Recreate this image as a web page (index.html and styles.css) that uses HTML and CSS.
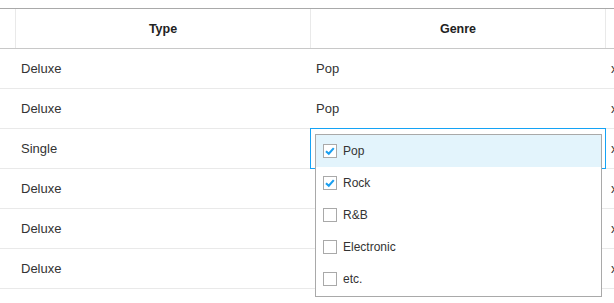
FILE: index.html
```html
<!DOCTYPE html>
<html>
<head>
<meta charset="utf-8">
<link rel="stylesheet" href="styles.css">
</head>
<body>
<div class="table">
  <div class="row head">
    <div class="cell c0"></div>
    <div class="cell c1">Type</div>
    <div class="cell c2">Genre</div>
    <div class="cell c3"></div>
  </div>
  <div class="row">
    <div class="cell c0"></div><div class="cell c1">Deluxe</div><div class="cell c2">Pop</div><div class="cell c3">x</div>
  </div>
  <div class="row">
    <div class="cell c0"></div><div class="cell c1">Deluxe</div><div class="cell c2">Pop</div><div class="cell c3">x</div>
  </div>
  <div class="row">
    <div class="cell c0"></div><div class="cell c1">Single</div>
    <div class="cell c2 editing">
      <div class="editor"></div>
      <div class="dropdown">
        <div class="item active"><span class="box checked"><svg viewBox="0 0 14 14" width="12" height="12"><path d="M2.3 7.2 L5.6 10.2 L11.4 3.6" fill="none" stroke="#1a9ff0" stroke-width="2.4"/></svg></span><span class="label">Pop</span></div>
        <div class="item"><span class="box checked"><svg viewBox="0 0 14 14" width="12" height="12"><path d="M2.3 7.2 L5.6 10.2 L11.4 3.6" fill="none" stroke="#1a9ff0" stroke-width="2.4"/></svg></span><span class="label">Rock</span></div>
        <div class="item"><span class="box"></span><span class="label">R&amp;B</span></div>
        <div class="item"><span class="box"></span><span class="label">Electronic</span></div>
        <div class="item"><span class="box"></span><span class="label">etc.</span></div>
      </div>
    </div>
    <div class="cell c3">x</div>
  </div>
  <div class="row">
    <div class="cell c0"></div><div class="cell c1">Deluxe</div><div class="cell c2"></div><div class="cell c3">x</div>
  </div>
  <div class="row">
    <div class="cell c0"></div><div class="cell c1">Deluxe</div><div class="cell c2"></div><div class="cell c3">x</div>
  </div>
  <div class="row">
    <div class="cell c0"></div><div class="cell c1">Deluxe</div><div class="cell c2"></div><div class="cell c3">x</div>
  </div>
</div>
</body>
</html>
```

FILE: styles.css
```css
html, body {
  margin: 0;
  padding: 0;
  background: #fff;
}
body {
  padding-top: 8px;
  width: 614px;
  height: 303px;
  box-sizing: border-box;
  overflow: hidden;
  font-family: "Liberation Sans", Arial, sans-serif;
  font-size: 13px;
  color: #333;
}
.table {
  border-top: 1px solid #a9a9a9;
  width: 614px;
}
.row {
  display: grid;
  grid-template-columns: 16px 295px 295px 8px;
  height: 40px;
  box-sizing: border-box;
  border-bottom: 1px solid #e9e9e9;
}
.cell {
  display: flex;
  align-items: center;
  padding-left: 5px;
  white-space: nowrap;
  overflow: hidden;
  box-sizing: border-box;
}
.c2.editing {
  overflow: visible;
}
.head {
  border-bottom: 1px solid #c8c8c8;
}
.head .cell {
  justify-content: center;
  padding-left: 0;
  font-weight: bold;
  font-size: 12.5px;
  color: #222;
  border-right: 1px solid #e9e9e9;
}
.head .c3 {
  border-right: none;
}
.editing {
  position: relative;
}
.editor {
  position: absolute;
  top: -1px;
  left: -1px;
  width: 296px;
  height: 41px;
  box-sizing: border-box;
  border: 1px solid #14a3f5;
}
.dropdown {
  position: absolute;
  top: 5px;
  left: 4px;
  width: 287px;
  box-sizing: border-box;
  border: 1px solid #a9a9a9;
  background: #fff;
  z-index: 2;
  font-size: 12px;
  padding-bottom: 1px;
}
.item {
  height: 32px;
  display: flex;
  align-items: center;
  padding-left: 7px;
}
.item.active {
  background: #e3f4fc;
}
.box {
  width: 14px;
  height: 14px;
  box-sizing: border-box;
  border: 1px solid #a9a9a9;
  background: #fff;
  display: flex;
  align-items: center;
  justify-content: center;
  margin-right: 6px;
}
.label {
  color: #333;
}
```
